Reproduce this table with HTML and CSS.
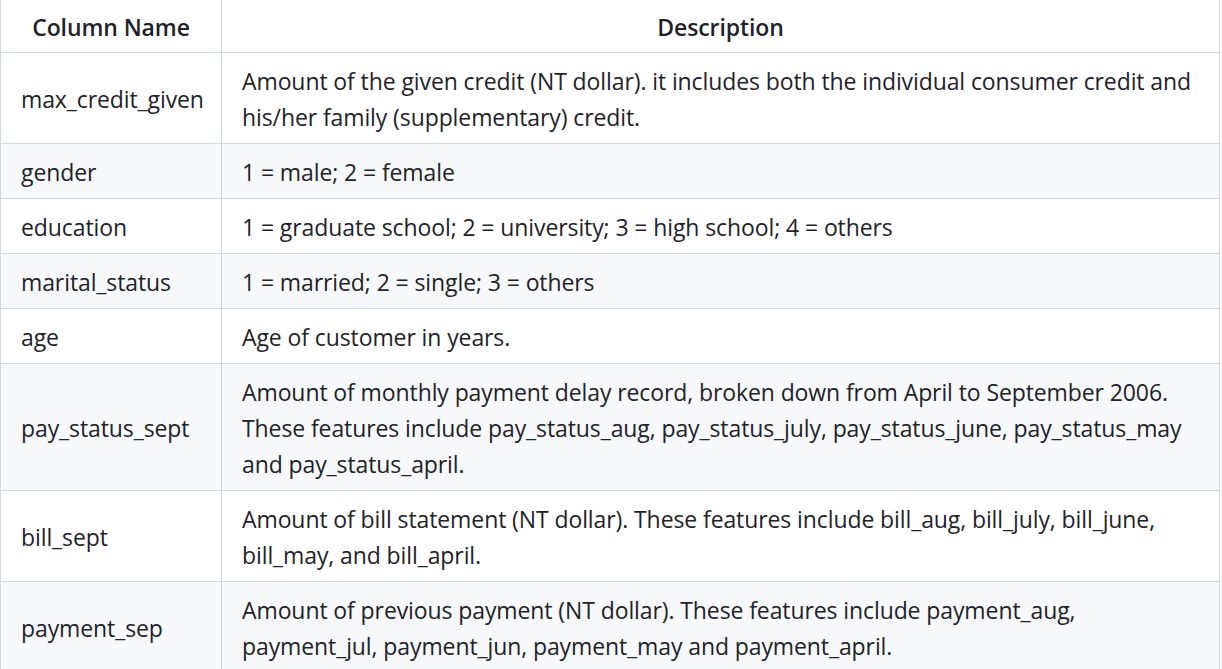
FILE: index.html
```html
<!DOCTYPE html>
<html lang="en">
<head>
<meta charset="utf-8">
<title>Columns</title>
<link rel="stylesheet" href="styles.css">
</head>
<body>
<table class="data-table">
  <colgroup>
    <col class="col-name">
    <col class="col-desc">
  </colgroup>
  <thead>
    <tr>
      <th>Column Name</th>
      <th>Description</th>
    </tr>
  </thead>
  <tbody>
    <tr>
      <td>max_credit_given</td>
      <td>Amount of the given credit (NT dollar). it includes both the individual consumer credit and his/her family (supplementary) credit.</td>
    </tr>
    <tr>
      <td>gender</td>
      <td>1 = male; 2 = female</td>
    </tr>
    <tr>
      <td>education</td>
      <td>1 = graduate school; 2 = university; 3 = high school; 4 = others</td>
    </tr>
    <tr>
      <td>marital_status</td>
      <td>1 = married; 2 = single; 3 = others</td>
    </tr>
    <tr>
      <td>age</td>
      <td>Age of customer in years.</td>
    </tr>
    <tr>
      <td>pay_status_sept</td>
      <td>Amount of monthly payment delay record, broken down from April to September 2006. These features include pay_status_aug, pay_status_july, pay_status_june, pay_status_may and pay_status_april.</td>
    </tr>
    <tr>
      <td>bill_sept</td>
      <td>Amount of bill statement (NT dollar). These features include bill_aug, bill_july, bill_june, bill_may, and bill_april.</td>
    </tr>
    <tr>
      <td>payment_sep</td>
      <td>Amount of previous payment (NT dollar). These features include payment_aug, payment_jul, payment_jun, payment_may and payment_april.</td>
    </tr>
  </tbody>
</table>
</body>
</html>
```

FILE: styles.css
```css
html, body {
  margin: 0;
  padding: 0;
  background: #ffffff;
}

body {
  font-family: "Open Sans", "Noto Sans", sans-serif;
  font-size: 23px;
  letter-spacing: -0.1px;
  line-height: 36px;
  color: #1f2328;
  overflow: hidden;
}

.data-table {
  border-collapse: collapse;
  border-spacing: 0;
  table-layout: fixed;
  width: 1220px;
  margin-top: -3px;
}

.col-name {
  width: 221px;
}

.data-table th,
.data-table td {
  border: 1px solid #d0d7de;
  padding: 10px 20px 8px;
  vertical-align: middle;
}

.data-table th {
  font-weight: 600;
  text-align: center;
  padding-top: 11px;
  padding-bottom: 7px;
}

.data-table td {
  text-align: left;
}

.data-table tbody tr:nth-child(odd) {
  background: #ffffff;
}

.data-table tbody tr:nth-child(even) {
  background: #f6f8fa;
}
```
